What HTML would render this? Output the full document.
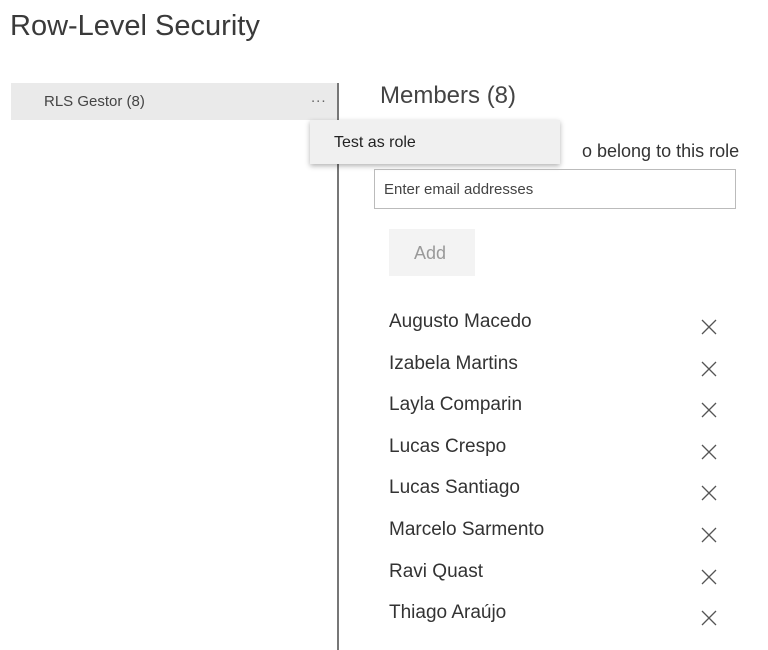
<!DOCTYPE html>
<html><head><style>
body{margin:0;width:768px;height:650px;background:#fff;font-family:"Liberation Sans",sans-serif;color:#333;position:relative;overflow:hidden}
.a{position:absolute;white-space:nowrap}
</style></head><body>
<div class="a" style="left:10px;top:10px;font-size:29px;color:#3a3a3a">Row-Level Security</div>
<div class="a" style="left:11px;top:83px;width:327px;height:37px;background:#eaeaea"></div>
<div class="a" style="left:44px;top:93px;font-size:15px;color:#444">RLS Gestor (8)</div>
<div class="a" style="left:311px;top:89px;font-size:15px;color:#666;letter-spacing:1px">...</div>
<div class="a" style="left:337px;top:83px;width:2px;height:567px;background:#777"></div>
<div class="a" style="left:380px;top:82px;font-size:24px;color:#444">Members (8)</div>
<div class="a" style="left:582px;top:141px;font-size:18px;color:#333">o belong to this role</div>
<div class="a" style="left:310px;top:120px;width:250px;height:44px;background:#f0f0f0;box-shadow:0 2px 5px rgba(0,0,0,.3)"></div>
<div class="a" style="left:334px;top:134px;font-size:16px;color:#222">Test as role</div>
<div class="a" style="left:374px;top:169px;width:360px;height:38px;border:1px solid #bbb"></div>
<div class="a" style="left:384px;top:181px;font-size:15px;color:#444">Enter email addresses</div>
<div class="a" style="left:389px;top:229px;width:86px;height:47px;background:#f3f3f3"></div>
<div class="a" style="left:414px;top:243px;font-size:18px;color:#999">Add</div>
<div id="list"></div>
<script>
var n=["Augusto Macedo","Izabela Martins","Layla Comparin","Lucas Crespo","Lucas Santiago","Marcelo Sarmento","Ravi Quast","Thiago Araújo"],h="";
n.forEach(function(s,i){var y=311+i*41.6;
h+='<div class="a" style="left:389px;top:'+y+'px;font-size:19px;color:#333">'+s+'</div>';
h+='<svg class="a" style="left:700px;top:'+(y+7)+'px" width="18" height="18"><path d="M2 2L16 16M16 2L2 16" stroke="#555" stroke-width="1.3"/></svg>';});
document.getElementById("list").innerHTML=h;
</script>
</body></html>
